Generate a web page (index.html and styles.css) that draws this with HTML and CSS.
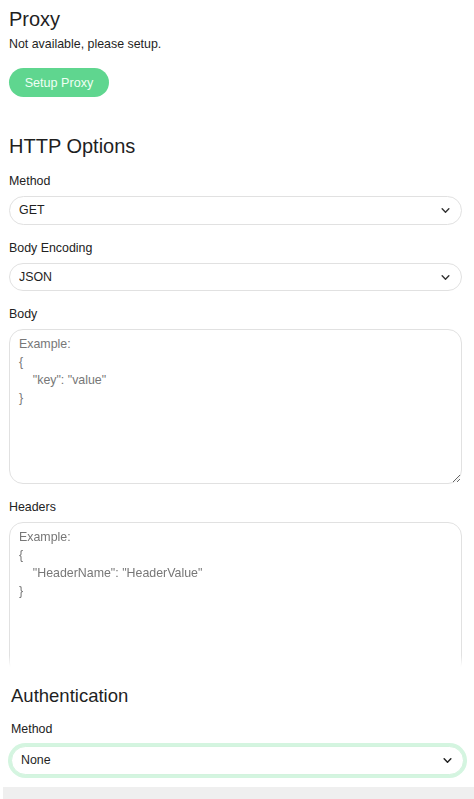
FILE: index.html
```html
<!DOCTYPE html>
<html lang="en">
<head>
<meta charset="utf-8">
<title>Proxy</title>
<link rel="stylesheet" href="styles.css">
</head>
<body>
<main class="page">
  <section class="proxy">
    <h2 class="title">Proxy</h2>
    <p class="note">Not available, please setup.</p>
    <button class="btn" type="button">Setup Proxy</button>
  </section>

  <section class="http">
    <h2 class="title title-http">HTTP Options</h2>

    <div class="field">
      <label class="label" for="method">Method</label>
      <div class="select-wrap">
        <select id="method" class="select"><option>GET</option><option>POST</option></select>
        <svg class="chev" viewBox="0 0 10 6" width="9" height="5"><path d="M1 1l4 4 4-4" fill="none" stroke="#333" stroke-width="1.7" stroke-linecap="round" stroke-linejoin="round"/></svg>
      </div>
    </div>

    <div class="field">
      <label class="label" for="enc">Body Encoding</label>
      <div class="select-wrap">
        <select id="enc" class="select"><option>JSON</option><option>Form</option></select>
        <svg class="chev" viewBox="0 0 10 6" width="9" height="5"><path d="M1 1l4 4 4-4" fill="none" stroke="#333" stroke-width="1.7" stroke-linecap="round" stroke-linejoin="round"/></svg>
      </div>
    </div>

    <div class="field">
      <label class="label" for="body">Body</label>
      <textarea id="body" class="area" placeholder="Example:&#10;{&#10;    &quot;key&quot;: &quot;value&quot;&#10;}"></textarea>
    </div>

    <div class="field">
      <label class="label" for="headers">Headers</label>
      <div class="clip">
        <textarea id="headers" class="area" placeholder="Example:&#10;{&#10;    &quot;HeaderName&quot;: &quot;HeaderValue&quot;&#10;}"></textarea>
      </div>
    </div>
  </section>

  <section class="auth">
    <h2 class="title-auth">Authentication</h2>
    <div class="field field-auth">
      <label class="label" for="auth">Method</label>
      <div class="select-wrap">
        <select id="auth" class="select select-focus"><option>None</option><option>Basic</option></select>
        <svg class="chev" viewBox="0 0 10 6" width="9" height="5"><path d="M1 1l4 4 4-4" fill="none" stroke="#222" stroke-width="1.8" stroke-linecap="round" stroke-linejoin="round"/></svg>
      </div>
    </div>
  </section>

  <div class="bottom-bar"></div>
</main>
</body>
</html>
```

FILE: styles.css
```css
html, body {
  margin: 0;
  padding: 0;
  background: #ffffff;
}

body {
  font-family: "Liberation Sans", Arial, sans-serif;
  color: #222;
  overflow: hidden;
  height: 799px;
}

.page {
  display: flex;
  flex-direction: column;
}

.proxy, .http {
  padding: 0 12px 0 9px;
  display: flex;
  flex-direction: column;
  align-items: flex-start;
}

.http {
  align-items: stretch;
}

.title {
  margin: 7px 0 0 0;
  font-size: 20px;
  line-height: 24px;
  font-weight: normal;
  color: #1f1f1f;
}

.title-http {
  margin-top: 37px;
}

.note {
  margin: 5px 0 0 0;
  font-size: 12.4px;
  line-height: 16px;
  color: #1f1f1f;
}

.btn {
  margin-top: 16px;
  width: 100px;
  height: 29px;
  border: none;
  border-radius: 15px;
  background: #5fd68f;
  color: #effff4;
  font-family: "Liberation Sans", Arial, sans-serif;
  font-size: 12.6px;
  padding: 0;
  cursor: pointer;
}

.field {
  display: flex;
  flex-direction: column;
  margin-top: 15px;
}

.label {
  font-size: 12.4px;
  line-height: 16px;
  color: #222;
  margin-bottom: 7px;
}

.select-wrap {
  position: relative;
}

.select {
  appearance: none;
  -webkit-appearance: none;
  width: 100%;
  height: 28.5px;
  box-sizing: border-box;
  border: 1px solid #e1e1e1;
  border-radius: 15px;
  background: #fff;
  font-family: "Liberation Sans", Arial, sans-serif;
  font-size: 12.4px;
  color: #1f1f1f;
  padding: 0 30px 0 9px;
  outline: none;
}

.chev {
  position: absolute;
  right: 12px;
  top: 50%;
  margin-top: -2px;
  pointer-events: none;
}

.area {
  display: block;
  width: 100%;
  height: 155px;
  box-sizing: border-box;
  border: 1px solid #e1e1e1;
  border-radius: 14px;
  background: #fff;
  font-family: "Liberation Sans", Arial, sans-serif;
  font-size: 12.4px;
  line-height: 17.9px;
  color: #222;
  padding: 6px 9px;
  outline: none;
  margin: 0;
}

.area::placeholder {
  color: #777;
  opacity: 1;
}

.clip {
  height: 145px;
  overflow: hidden;
  -webkit-mask-image: linear-gradient(to bottom, #000 92%, transparent 100%);
  mask-image: linear-gradient(to bottom, #000 92%, transparent 100%);
}

.auth {
  padding: 0 10px 0 11px;
  display: flex;
  flex-direction: column;
}

.title-auth {
  margin: 18px 0 0 0;
  font-size: 18.5px;
  line-height: 22px;
  font-weight: normal;
  color: #1f1f1f;
}

.field-auth {
  margin-top: 14px;
}

.field-auth .label {
  margin-bottom: 8.5px;
}

.select-focus {
  height: 29px;
  border-color: #d3f3de;
  box-shadow: 0 0 0 3px #d4f5e0;
}

.bottom-bar {
  margin: 12px 0 0 3px;
  height: 20px;
  background: #efefef;
}
```
